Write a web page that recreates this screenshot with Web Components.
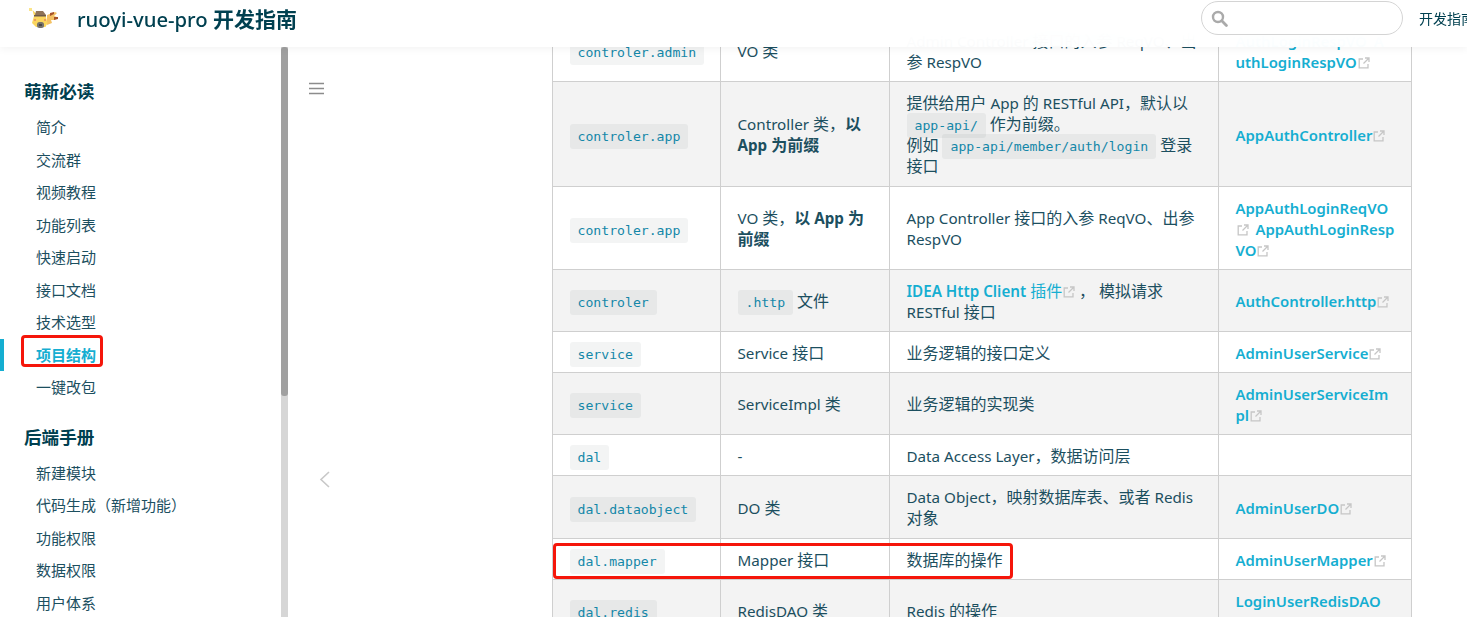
<!DOCTYPE html>
<html lang="zh-CN">
<head>
<meta charset="UTF-8" />
<title>项目结构 | ruoyi-vue-pro 开发指南</title>
<style>
  html, body { margin: 0; height: 100%; overflow: hidden; background: #fff; }
  body {
    font-family: "Noto Sans", "Noto Sans CJK SC", sans-serif;
    color: #1c4f5f;
  }
</style>
</head>
<body>
<doc-app>
  <doc-header slot="header"></doc-header>
  <doc-sidebar slot="sidebar">
    <side-group title="萌新必读">
      <side-link>简介</side-link>
      <side-link>交流群</side-link>
      <side-link>视频教程</side-link>
      <side-link>功能列表</side-link>
      <side-link>快速启动</side-link>
      <side-link>接口文档</side-link>
      <side-link>技术选型</side-link>
      <side-link active>项目结构</side-link>
      <side-link>一键改包</side-link>
    </side-group>
    <side-group title="后端手册">
      <side-link>新建模块</side-link>
      <side-link>代码生成（新增功能）</side-link>
      <side-link>功能权限</side-link>
      <side-link>数据权限</side-link>
      <side-link>用户体系</side-link>
    </side-group>
  </doc-sidebar>
  <doc-gutter slot="gutter"></doc-gutter>
  <doc-table slot="main"></doc-table>
</doc-app>

<script>
  class DocApp extends HTMLElement {
    constructor() {
      super();
      this.attachShadow({ mode: 'open' }).innerHTML = `
        <style>
          :host { display: flex; position: relative; height: 617px; overflow: hidden; }
          .main { flex: 1; min-width: 0; }
        </style>
        <slot name="header"></slot>
        <slot name="sidebar"></slot>
        <slot name="gutter"></slot>
        <div class="main"><slot name="main"></slot></div>
      `;
    }
  }
  customElements.define('doc-app', DocApp);

  class DocHeader extends HTMLElement {
    constructor() {
      super();
      this.attachShadow({ mode: 'open' }).innerHTML = `
        <style>
          :host {
            position: absolute; top: 0; left: 0; right: 0; z-index: 5;
            height: 47px; display: flex; align-items: flex-start; overflow: hidden;
            background: rgba(255,255,255,.96);
            backdrop-filter: blur(12px);
            box-shadow: 0 2px 8px rgba(0,0,0,.05);
          }
          .logo { margin: 7px 0 0 29px; flex: none; }
          .title {
            margin: 3px 0 0 18px; font-size: 20.3px; font-weight: 500; line-height: 32px;
            color: #004050; white-space: nowrap; flex: 1;
          }
          .title b { font-weight: 700; font-size: 21px; }
          .search {
            flex: none; box-sizing: border-box; width: 202px; height: 34px; margin-top: 1px;
            border: 1px solid #d4d4d4; border-radius: 17px; background: #fff;
            display: flex; align-items: center; padding-left: 9px;
          }
          .nav {
            flex: none; width: 48px; margin: 8px 0 0 16px; overflow: hidden;
            white-space: nowrap; font-size: 14px; line-height: 21px; color: #004050;
          }
        </style>
        <svg class="logo" width="30" height="24" viewBox="0 0 30 24">
          <rect x="0" y="1" width="3" height="3" fill="#fbe58a"/>
          <path d="M18 8l8-3 2 1-3 3 3 1-2 3-4 0 1 3-5 2z" fill="#f4c163"/>
          <path d="M21 6l4-1v2l-4 2zM25 10h4v2l-4 1z" fill="#a5522a"/>
          <path d="M5 9L3.500 3l3 3h7l3 2 2 8-2 4H7l-4-4z" fill="#fbd65e"/>
          <path d="M7 4h7l3 4H6z" fill="#8f7358"/>
          <rect x="5" y="8" width="12" height="1.500" fill="#6e5a4a"/>
          <rect x="8" y="15" width="7" height="6" rx="2.500" fill="#76726c"/>
          <rect x="10" y="17" width="3" height="2" fill="#4b4845"/>
          <rect x="5" y="12" width="2" height="2" fill="#ee9a62"/>
          <rect x="15" y="12" width="2" height="2" fill="#ee9a62"/>
        </svg>
        <div class="title">ruoyi-vue-pro <b>开发指南</b></div>
        <div class="search">
          <svg width="17" height="17" viewBox="0 0 17 17" fill="none" stroke="#aaa">
            <circle cx="7" cy="7" r="5" stroke-width="2.4"/>
            <path d="M10.800 10.800l4.600 4.600" stroke-width="2.800" stroke-linecap="round"/>
          </svg>
        </div>
        <div class="nav">开发指南</div>
      `;
    }
  }
  customElements.define('doc-header', DocHeader);

  class DocSidebar extends HTMLElement {
    constructor() {
      super();
      this.attachShadow({ mode: 'open' }).innerHTML = `
        <style>
          :host { display: flex; flex: none; width: 288px; height: 617px; box-sizing: border-box; padding-top: 47px; }
          .list { width: 281px; flex: none; overflow: hidden; padding-top: 30px; }
          .track { width: 7px; flex: none; background: #d6d6d6; }
          .thumb { height: 349px; background: #a0a0a0; border-radius: 3px; }
        </style>
        <div class="list"><slot></slot></div>
        <div class="track"><div class="thumb"></div></div>
      `;
    }
  }
  customElements.define('doc-sidebar', DocSidebar);

  class SideGroup extends HTMLElement {
    constructor() {
      super();
      this.attachShadow({ mode: 'open' }).innerHTML = `
        <style>
          :host { display: block; margin-bottom: 19px; }
          h3 {
            margin: -1px 0 5px; padding-left: 24px; font-size: 17.6px; line-height: 30px;
            font-weight: 700; color: #004050;
          }
        </style>
        <h3></h3>
        <slot></slot>
      `;
      this.shadowRoot.querySelector('h3').textContent = this.getAttribute('title');
    }
  }
  customElements.define('side-group', SideGroup);

  class SideLink extends HTMLElement {
    constructor() {
      super();
      this.attachShadow({ mode: 'open' }).innerHTML = `
        <style>
          :host {
            display: block; position: relative; height: 32.5px; line-height: 32.5px;
            padding-left: 36px; font-size: 15px; color: #1c4f5f;
          }
          :host([active]) { color: #15aed1; font-weight: 700; }
          :host([active])::before {
            content: ""; position: absolute; left: 0; top: 0; bottom: 0; width: 4px; background: #15aed1;
          }
          .mark {
            display: none; position: absolute; left: 21px; top: -4px; width: 82px; height: 32px;
            box-sizing: border-box; border: 3px solid #f5160a; border-radius: 4px;
          }
          :host([active]) .mark { display: block; }
        </style>
        <slot></slot><span class="mark"></span>
      `;
    }
  }
  customElements.define('side-link', SideLink);

  class DocGutter extends HTMLElement {
    constructor() {
      super();
      this.attachShadow({ mode: 'open' }).innerHTML = `
        <style>
          :host {
            display: flex; flex-direction: column; align-items: flex-start; flex: none;
            width: 264px; box-sizing: border-box; padding: 82px 0 0 21px;
          }
          .toggle { display: block; }
          .back { display: block; margin: 376px 0 0 10px; }
        </style>
        <svg class="toggle" width="15" height="13" viewBox="0 0 15 13" stroke="#8c8c8c" stroke-width="1.6">
          <path d="M0 1.5h15M0 6.5h15M0 11.5h15"/>
        </svg>
        <svg class="back" width="11" height="17" viewBox="0 0 11 17" fill="none" stroke="#c8c8c8" stroke-width="1.6">
          <path d="M10 1L2 8.5 10 16"/>
        </svg>
      `;
    }
  }
  customElements.define('doc-gutter', DocGutter);

  class ExtLink extends HTMLElement {
    constructor() {
      super();
      this.attachShadow({ mode: 'open' }).innerHTML = `<style>
          :host { display: inline; color: #15aed1; font-weight: 600; }
          svg { display: inline-block; vertical-align: -1px; margin-left: 1px; }
        </style><slot></slot><svg width="12" height="12" viewBox="0 0 12 12" fill="none" stroke="#c6c6c6" stroke-width="1.3">
          <path d="M5 2H1.2v8.800H10V7"/><path d="M7 1h4v4M11 1L5.500 6.500"/>
        </svg>`;
    }
  }
  customElements.define('ext-link', ExtLink);

  class CodePill extends HTMLElement {
    constructor() {
      super();
      this.attachShadow({ mode: 'open' }).innerHTML = `<style>
          :host {
            display: inline; padding: 5px 8px; border-radius: 3px; line-height: 1;
            background: rgba(27,31,35,.05); color: #1487a8;
            font-family: "DejaVu Sans Mono", monospace; font-size: 13.15px;
            word-break: normal;
          }
        </style><slot></slot>`;
    }
  }
  customElements.define('code-pill', CodePill);

  const rows = [
    { h: 62, a: 'controler.admin', b: 'VO 类',
      c: 'Admin Controller 接口的入参 ReqVO、出<br>参 RespVO',
      d: '<span class="lnk">AuthLoginRespVO A</span><br><ext-link>uthLoginRespVO</ext-link>' },
    { h: 105, a: 'controler.app', b: 'Controller 类，<b>以 App 为前缀</b>',
      c: '提供给用户 App 的 RESTful API，默认以 <code-pill>app-api/</code-pill> 作为前缀。<br>例如 <code-pill>app-api/member/auth/login</code-pill> 登录接口',
      d: '<ext-link>AppAuthController</ext-link>' },
    { h: 83, a: 'controler.app', b: 'VO 类，<b>以 App 为前缀</b>',
      c: 'App Controller 接口的入参 ReqVO、出参 RespVO',
      d: '<ext-link>AppAuthLoginReqVO</ext-link> <ext-link>AppAuthLoginRespVO</ext-link>' },
    { h: 62, a: 'controler', b: '<code-pill>.http</code-pill> 文件',
      c: '<ext-link>IDEA Http Client 插件</ext-link> ， 模拟请求 RESTful 接口',
      d: '<ext-link>AuthController.http</ext-link>' },
    { h: 41, a: 'service', b: 'Service 接口', c: '业务逻辑的接口定义', d: '<ext-link>AdminUserService</ext-link>' },
    { h: 62, a: 'service', b: 'ServiceImpl 类', c: '业务逻辑的实现类', d: '<ext-link>AdminUserServiceImpl</ext-link>' },
    { h: 41, a: 'dal', b: '-', c: 'Data Access Layer，数据访问层', d: '' },
    { h: 63, a: 'dal.dataobject', b: 'DO 类', c: 'Data Object，映射数据库表、或者 Redis 对象', d: '<ext-link>AdminUserDO</ext-link>' },
    { h: 41, a: 'dal.mapper', b: 'Mapper 接口', c: '数据库的操作', d: '<ext-link>AdminUserMapper</ext-link>' },
    { h: 62, a: 'dal.redis', b: 'RedisDAO 类', c: 'Redis 的操作', d: '<ext-link>LoginUserRedisDAO<br></ext-link>' }
  ];

  // the reference's Chinese runs are a size larger than its latin text
  const zh = html => html.replace(/[\u4e00-\u9fff，、。]+/g, m => `<span class="zh">${m}</span>`);

  class DocTable extends HTMLElement {
    constructor() {
      super();
      const body = rows.map(r => `
        <tr style="height:${r.h}px">
          <td><code-pill>${r.a}</code-pill></td>
          <td>${zh(r.b)}</td>
          <td>${zh(r.c)}</td>
          <td class="ref">${r.d}</td>
        </tr>`).join('');
      this.attachShadow({ mode: 'open' }).innerHTML = `
        <style>
          :host { display: block; position: relative; padding-top: 19px; width: 859px; }
          table {
            border-collapse: collapse; table-layout: fixed; width: 859px;
            font-size: 15.2px; line-height: 21px;
          }
          td { border: 1px solid #cfcfcf; padding: 10.5px 16.5px 8.5px; box-sizing: border-box; }
          tr:nth-child(even) { background: #f3f3f3; }
          b { font-weight: 700; }
          .zh { font-size: 16px; line-height: 1; }
          ext-link .zh { font-weight: 400; }
          .ref { word-break: break-all; word-spacing: 3px; font-size: 14.9px; }
          .lnk { color: #15aed1; font-weight: 600; }
          .mark {
            position: absolute; left: 1px; top: 543px; width: 460px; height: 36px;
            box-sizing: border-box; border: 3px solid #f5160a; border-radius: 4px;
          }
        </style>
        <table>
          <colgroup><col style="width:168px"><col style="width:169px"><col style="width:329px"><col style="width:193px"></colgroup>
          <tbody>${body}</tbody>
        </table>
        <div class="mark"></div>
      `;
    }
  }
  customElements.define('doc-table', DocTable);
</script>
</body>
</html>
